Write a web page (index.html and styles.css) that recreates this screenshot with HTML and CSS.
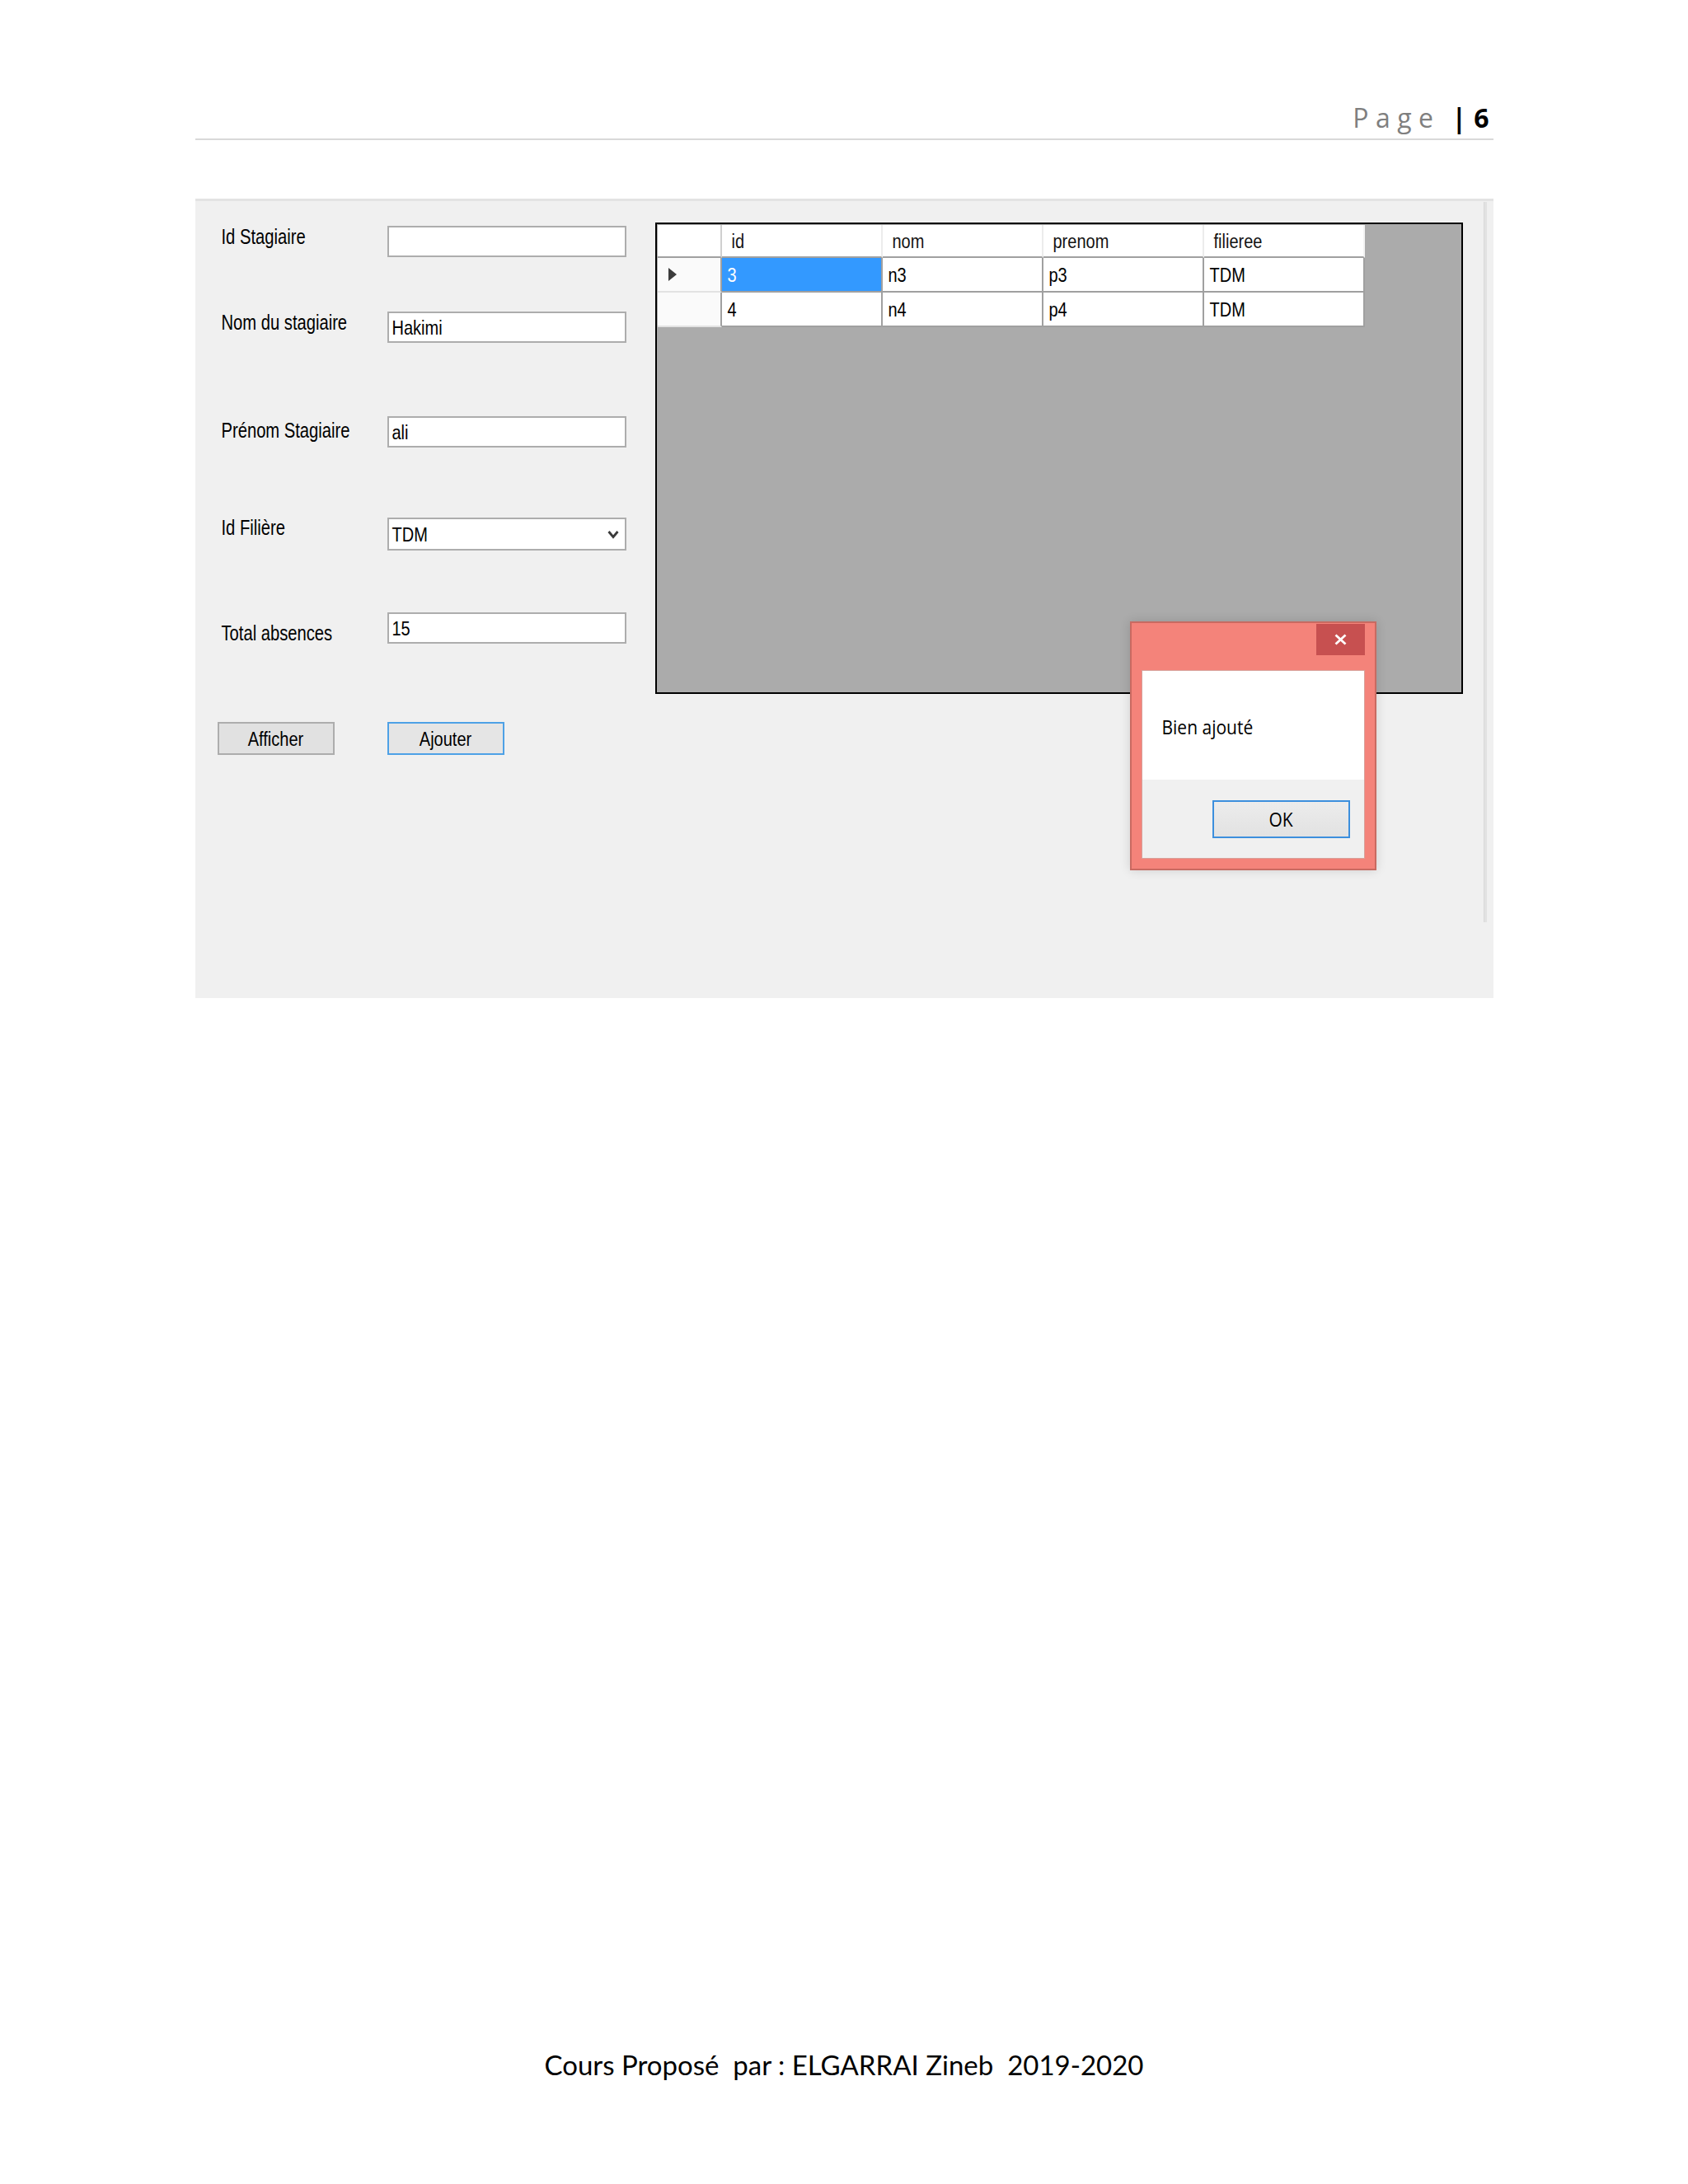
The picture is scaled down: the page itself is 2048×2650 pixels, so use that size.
FILE: index.html
```html
<!DOCTYPE html>
<html lang="fr">
<head>
<meta charset="utf-8">
<title>Page 6</title>
<link rel="stylesheet" href="styles.css">
</head>
<body>
<div class="page">
  <header class="running-head">
    <span class="pg-word">Page</span><span class="pg-bar">|</span><span class="pg-num">6</span>
  </header>

  <section class="shot">
    <div class="form-col">
      <div class="row r1">
        <span class="lbl"><span class="tx">Id Stagiaire</span></span>
        <div class="field"></div>
      </div>
      <div class="row r2">
        <span class="lbl"><span class="tx">Nom du stagiaire</span></span>
        <div class="field"><span class="tx">Hakimi</span></div>
      </div>
      <div class="row r3">
        <span class="lbl lbl-mid"><span class="tx">Prénom Stagiaire</span></span>
        <div class="field"><span class="tx">ali</span></div>
      </div>
      <div class="row r4">
        <span class="lbl lbl-high"><span class="tx">Id Filière</span></span>
        <div class="field combo">
          <span class="tx">TDM</span>
          <svg class="chev" width="14" height="11" viewBox="0 0 14 11"><polyline points="1.5,2 7,8.5 12.5,2" fill="none" stroke="#3a3a3a" stroke-width="2.8"/></svg>
        </div>
      </div>
      <div class="row r5">
        <span class="lbl lbl-low"><span class="tx">Total absences</span></span>
        <div class="field"><span class="tx">15</span></div>
      </div>
      <div class="btn-row">
        <button class="btn"><span class="tx">Afficher</span></button>
        <button class="btn btn-focus"><span class="tx">Ajouter</span></button>
      </div>
    </div>

    <div class="dgv">
      <div class="dgv-table">
        <div class="corner"></div>
        <div class="ch"><span class="tx">id</span></div>
        <div class="ch"><span class="tx">nom</span></div>
        <div class="ch"><span class="tx">prenom</span></div>
        <div class="ch ch-last"><span class="tx">filieree</span></div>

        <div class="rh"><svg class="cur" width="10" height="16" viewBox="0 0 10 16"><polygon points="0,0 10,8 0,16" fill="#3c3c3c"/></svg></div>
        <div class="cell sel"><span class="tx">3</span></div>
        <div class="cell"><span class="tx">n3</span></div>
        <div class="cell"><span class="tx">p3</span></div>
        <div class="cell"><span class="tx">TDM</span></div>

        <div class="rh"></div>
        <div class="cell"><span class="tx">4</span></div>
        <div class="cell"><span class="tx">n4</span></div>
        <div class="cell"><span class="tx">p4</span></div>
        <div class="cell"><span class="tx">TDM</span></div>
      </div>
    </div>

    <div class="edge"></div>

    <div class="msgbox">
      <div class="msg-title">
        <div class="msg-close">
          <svg width="17" height="14" viewBox="0 0 17 14"><path d="M2.5 1.5 L14.5 12.5 M14.5 1.5 L2.5 12.5" stroke="#ffffff" stroke-width="2.8" fill="none"/></svg>
        </div>
      </div>
      <div class="msg-client">
        <div class="msg-body"><span class="mtx">Bien ajouté</span></div>
        <div class="msg-foot">
          <button class="ok"><span class="mtx">OK</span></button>
        </div>
      </div>
    </div>
  </section>

  <footer class="running-foot">Cours Proposé&nbsp; par : ELGARRAI Zineb&nbsp; 2019-2020</footer>
</div>
</body>
</html>
```

FILE: styles.css
```css
html, body {
  margin: 0;
  padding: 0;
  background: #ffffff;
}

.page {
  width: 1575px;
  margin: 0 auto;
  height: 2650px;
}

/* ---------- running header ---------- */
.running-head {
  display: flex;
  justify-content: flex-end;
  align-items: baseline;
  padding: 121px 5px 3px 0;
  line-height: 44px;
  font-family: "Open Sans", "Liberation Sans", sans-serif;
  font-size: 32px;
  border-bottom: 2px solid #d9d9d9;
}

.pg-word {
  color: #7f7f7f;
  letter-spacing: 8.5px;
}

.pg-bar {
  font-weight: 700;
  color: #000;
  margin-left: 14px;
}

.pg-num {
  font-weight: 700;
  color: #000;
  margin-left: 9px;
}

/* ---------- screenshot panel ---------- */
.shot {
  position: relative;
  display: flex;
  align-items: flex-start;
  height: 970px;
  margin-top: 71px;
  background: #f0f0f0;
  box-shadow: inset 0 3px 0 #e3e3e3;
  font-family: "Liberation Sans", Arial, sans-serif;
  font-size: 20px;
  color: #000;
}

.tx {
  display: inline-block;
  transform: scaleY(1.24);
  line-height: 20px;
  white-space: pre;
}

.form-col {
  width: 491px;
  padding: 33px 0 0 32px;
  display: flex;
  flex-direction: column;
}

.row {
  display: flex;
  align-items: flex-start;
}

.r2 { margin-top: 66px; }
.r3 { margin-top: 89px; }
.r4 { margin-top: 85px; }
.r5 { margin-top: 75px; }

.lbl {
  width: 201px;
  height: 20px;
  line-height: 20px;
  margin-top: 3px;
  font-size: 20.2px;
}

.lbl-mid { margin-top: 7px; }
.lbl-high { margin-top: 2px; }
.lbl-low { margin-top: 15px; }

.field {
  box-sizing: border-box;
  width: 290px;
  height: 38px;
  border: 2px solid #adadad;
  background: #ffffff;
  display: flex;
  align-items: center;
  padding-left: 4px;
}

.combo {
  height: 40px;
  justify-content: space-between;
  padding-right: 7px;
}

.chev {
  display: block;
  margin-top: 1px;
}

.btn-row {
  display: flex;
  gap: 64px;
  margin-top: 95px;
  margin-left: -5px;
}

.btn {
  box-sizing: border-box;
  width: 142px;
  height: 40px;
  margin: 0;
  padding: 0;
  border: 2px solid #adadad;
  background: #e1e1e1;
  font-family: "Liberation Sans", Arial, sans-serif;
  font-size: 20px;
  color: #000;
  display: flex;
  align-items: center;
  justify-content: center;
}

.btn-focus {
  border-color: #4ea1e6;
  background: #e5e5e5;
}

/* ---------- data grid ---------- */
.dgv {
  box-sizing: border-box;
  width: 980px;
  height: 572px;
  margin: 29px 0 0 35px;
  border: 2px solid #000;
  background: #ababab;
  padding: 1px 0 0 1px;
}

.dgv-table {
  display: grid;
  grid-template-columns: 78px repeat(4, 195px);
  grid-template-rows: 40px 42px 42px;
  width: 858px;
}

.dgv-table > div {
  box-sizing: border-box;
  display: flex;
  align-items: center;
}

.corner {
  background: #ffffff;
  border-right: 2px solid #cfcfcf;
  border-bottom: 2px solid #a0a0a0;
}

.ch {
  background: #ffffff;
  border-right: 2px solid #ececec;
  border-bottom: 2px solid #a0a0a0;
  padding-left: 12px;
  color: #141414;
}

.ch-last {
  border-right: 2px solid #f4f4f4;
}

.rh {
  background: #fafafa;
  border-right: 2px solid #a0a0a0;
  border-bottom: 2px solid #e2e2e2;
  padding-left: 13px;
}

.cur {
  display: block;
}

.cell {
  background: #ffffff;
  border-right: 2px solid #a0a0a0;
  border-bottom: 2px solid #a0a0a0;
  padding-left: 7px;
}

.cell.sel {
  background: #3399ff;
  color: #ffffff;
}

/* ---------- right edge of the form ---------- */
.edge {
  width: 3px;
  height: 874px;
  margin: 4px 0 0 25px;
  background: #e2e2e2;
  border-left: 1px solid #d9d9d9;
}

/* ---------- message box ---------- */
.msgbox {
  position: absolute;
  left: 1134px;
  top: 513px;
  box-sizing: border-box;
  width: 299px;
  height: 302px;
  border: 2px solid #c96a61;
  background: #f4837a;
  box-shadow: 0 0 12px rgba(0, 0, 0, 0.14);
  padding: 0 12px 12px 12px;
  display: flex;
  flex-direction: column;
  font-family: "Open Sans", "Noto Sans", sans-serif;
  font-size: 21px;
  color: #000;
}

.msg-title {
  height: 57px;
  display: flex;
  justify-content: flex-end;
  align-items: flex-start;
}

.msg-close {
  width: 59px;
  height: 38px;
  margin-top: 1px;
  background: #c75050;
  display: flex;
  align-items: center;
  justify-content: center;
}

.msg-close svg {
  display: block;
}

.msg-client {
  flex: 1;
  display: flex;
  flex-direction: column;
  border: 1px solid #d8a09a;
  background: #f0f0f0;
}

.msg-body {
  height: 132px;
  background: #ffffff;
  box-sizing: border-box;
  padding: 54px 0 0 24px;
}

.mtx {
  display: inline-block;
  line-height: 21px;
  transform: scaleY(1.12);
}

.msg-foot {
  flex: 1;
  display: flex;
  justify-content: flex-end;
  align-items: flex-start;
  padding: 25px 17px 0 0;
}

.ok {
  box-sizing: border-box;
  width: 167px;
  height: 46px;
  margin: 0;
  padding: 0;
  border: 2px solid #3c8fdd;
  background: linear-gradient(#ececec, #e2e2e2);
  font-family: "Open Sans", "Noto Sans", sans-serif;
  font-size: 21px;
  color: #000;
  display: flex;
  align-items: center;
  justify-content: center;
}

/* ---------- running footer ---------- */
.running-foot {
  margin-top: 1274px;
  text-align: center;
  font-family: Lato, "Open Sans", sans-serif;
  font-size: 33px;
  line-height: 40px;
  color: #000;
}
```
